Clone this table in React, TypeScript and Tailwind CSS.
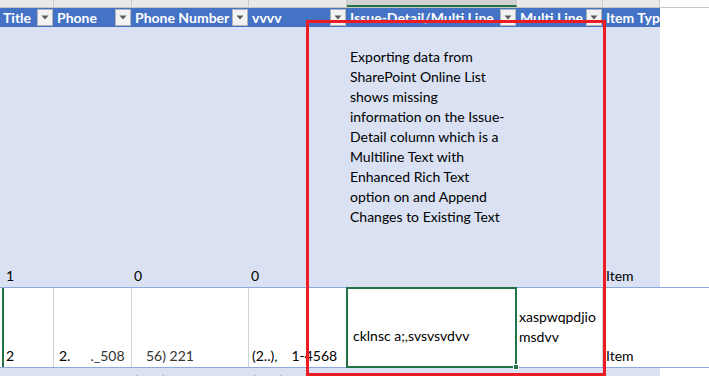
import React from 'react';

const cols = 'grid grid-cols-[54px_78px_117px_98px_170px_86px_57px_1fr]';

const letters = ['A', 'B', 'C', 'D', 'E', 'F', 'G'];

const headers = ['Title', 'Phone', 'Phone Number', 'vvvv', 'Issue-Detail/Multi Line', 'Multi Line'];

const issueLines = [
  'Exporting data from',
  'SharePoint Online List',
  'shows missing',
  'information on the Issue-',
  'Detail column which is a',
  'Multiline Text with',
  'Enhanced Rich Text',
  'option on and Append',
  'Changes to Existing Text',
];

const FilterButton = () => (
  <div className="w-[16px] h-[17px] shrink-0 bg-[#f2f2f2] border border-[#b5b5b5] flex items-center justify-center mr-[1px]">
    <svg width="8" height="5" viewBox="0 0 8 5">
      <path d="M0.5 0.5 L7.5 0.5 L4 4.5 Z" fill="#5a5a5a" />
    </svg>
  </div>
);

const App = () => {
  return (
    <div className="w-[709px] h-[376px] overflow-hidden bg-white relative font-['Lato',sans-serif] text-[14px] text-black">
      {/* column letters strip */}
      <div className={`${cols} h-[8px] bg-[#e9e9e9] border-b border-[#c6c6c6]`}>
        {letters.map((l) => (
          <div
            key={l}
            className={`relative overflow-hidden border-r border-[#c8c8c8] ${l === 'E' ? 'bg-[#d2d2d2] border-b-2 border-b-[#217346]' : ''}`}
          >
            <div className="absolute left-0 right-0 bottom-[5px] text-center text-[13px] leading-[14px] text-[#444]">{l}</div>
          </div>
        ))}
        <div className="bg-white" />
      </div>

      {/* header row */}
      <div className={`${cols} h-[19px]`}>
        {headers.map((h, i) => (
          <div key={h} className="bg-[#4472c4] flex items-center overflow-hidden">
            <div className="flex-1 min-w-0 overflow-hidden whitespace-nowrap pl-[3px] font-bold text-white leading-[19px]">
              {h}
            </div>
            <FilterButton />
          </div>
        ))}
        <div className="bg-[#4472c4] overflow-hidden whitespace-nowrap pl-[3px] font-bold text-white leading-[19px]">
          Item Type
        </div>
        <div className="bg-white" />
      </div>

      {/* row 1 */}
      <div className={`${cols} h-[261px] border-b border-[#8ea9db]`}>
        <div className="bg-[#d9e1f2] flex items-end pl-[6px] pb-[1px]">1</div>
        <div className="bg-[#d9e1f2]" />
        <div className="bg-[#d9e1f2] flex items-end pl-[2px] pb-[1px]">0</div>
        <div className="bg-[#d9e1f2] flex items-end pl-[2px] pb-[1px]">0</div>
        <div className="bg-[#d9e1f2] pl-[3px] pt-[20px] leading-[20px] whitespace-nowrap overflow-hidden">
          {issueLines.map((l) => (
            <div key={l}>{l}</div>
          ))}
        </div>
        <div className="bg-[#d9e1f2]" />
        <div className="bg-[#d9e1f2] flex items-end pl-[3px] pb-[1px]">Item</div>
        <div className="bg-white" />
      </div>

      {/* row 2 */}
      <div className={`${cols} h-[80px] border-b border-[#8ea9db]`}>
        <div className="pl-[2px] border-r border-[#d4d4d4] flex">
          <div className="border-l-2 border-[#217346] flex-1 flex items-end pl-[2px] pb-[1px]">2</div>
        </div>
        <div className="border-r border-[#d4d4d4] flex items-end pl-[5px] pb-[1px] whitespace-nowrap overflow-hidden">
          <span>2.</span>
          <span className="ml-[20px] text-[#333]">._508</span>
        </div>
        <div className="border-r border-[#d4d4d4] flex items-end pl-[14px] pb-[1px] whitespace-nowrap overflow-hidden">
          <span className="text-[#333]">56) 221</span>
        </div>
        <div className="border-r border-[#d4d4d4] flex items-end pl-[3px] pb-[1px] whitespace-nowrap overflow-hidden">
          <span>(2..),</span>
          <span className="ml-[14px]">1-4568</span>
        </div>
        <div className="relative border-2 border-[#217346] -mt-[1px] -mb-[1px] -ml-[1px] flex items-end pl-[5px] pb-[20px] leading-[20px] whitespace-nowrap">
          cklnsc a;,svsvsvdvv
          <div className="absolute -right-[4px] -bottom-[4px] w-[6px] h-[6px] bg-[#217346] border border-white" />
        </div>
        <div className="border-r border-[#d4d4d4] flex flex-col justify-end pl-[2px] pb-[20px] leading-[20px] whitespace-nowrap">
          <div>xaspwqpdjio</div>
          <div>msdvv</div>
        </div>
        <div className="flex items-end pl-[3px] pb-[1px]">Item</div>
        <div />
      </div>

      {/* row 3 (partly visible) */}
      <div className={`${cols} h-[20px]`}>
        <div className="bg-[#d9e1f2] pl-[6px] pt-[2px]">1</div>
        <div className="bg-[#d9e1f2] pl-[5px] pt-[2px] whitespace-nowrap overflow-hidden">1234567890</div>
        <div className="bg-[#d9e1f2] pl-[2px] pt-[2px] whitespace-nowrap overflow-hidden">(123) 456-7890</div>
        <div className="bg-[#d9e1f2] pl-[3px] pt-[2px] whitespace-nowrap overflow-hidden">(123) 456-7890</div>
        <div className="bg-[#d9e1f2]" />
        <div className="bg-[#d9e1f2]" />
        <div className="bg-[#d9e1f2] pl-[3px] pt-[2px]">Item</div>
        <div className="bg-white" />
      </div>

      {/* red highlight box */}
      <div className="absolute left-[306px] top-[20px] w-[300px] h-[356px] border-[3px] border-[#ed1c24] pointer-events-none" />
    </div>
  );
};

export default App;
